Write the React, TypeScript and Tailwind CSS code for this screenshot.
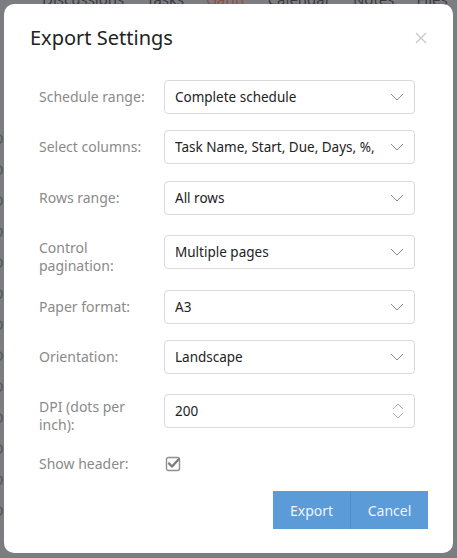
import React from "react";

const font = { fontFamily: '"Noto Sans", "Open Sans", sans-serif' };

function Chevron() {
  return (
    <svg width="14" height="8" viewBox="0 0 14 8" className="shrink-0">
      <polyline points="1,1 7,7 13,1" fill="none" stroke="#8a8a8a" strokeWidth="1" />
    </svg>
  );
}

function Spinner() {
  return (
    <svg width="12" height="18" viewBox="0 0 12 18" className="shrink-0">
      <polyline points="1,7 6,2 11,7" fill="none" stroke="#b0b0b0" strokeWidth="1" />
      <polyline points="1,11 6,16 11,11" fill="none" stroke="#b0b0b0" strokeWidth="1" />
    </svg>
  );
}

function Field({ value, spin }: { value: string; spin?: boolean }) {
  return (
    <div className="w-[251px] h-[34px] shrink-0 border border-[#d9d9d9] rounded-[4px] flex items-center pl-[10px] pr-[10px] bg-white">
      <span className="flex-1 text-[13.5px] text-[#222] whitespace-nowrap overflow-hidden">{value}</span>
      {spin ? <Spinner /> : <Chevron />}
    </div>
  );
}

function Row({ label, value, spin, cls }: { label: React.ReactNode; value: string; spin?: boolean; cls: string }) {
  return (
    <div className={"flex items-start " + cls}>
      <div className="w-[125px] shrink-0 text-[14px] leading-[18px] text-[#8a8a8a]">{label}</div>
      <Field value={value} spin={spin} />
    </div>
  );
}

export default function App() {
  return (
    <div className="relative w-[457px] h-[558px] overflow-hidden bg-[#7b7d81]" style={font}>
      <div className="flex gap-[22px] pl-[42px] -mt-[12px] text-[15px] text-[#3a3b3e] whitespace-nowrap">
        <span>Discussions</span>
        <span>Tasks</span>
        <span className="text-[#9a4a45]">Gantt</span>
        <span>Calendar</span>
        <span>Notes</span>
        <span>Files</span>
      </div>
      <div className="absolute left-[-8px] top-[130px] flex flex-col gap-[14px] text-[15px] leading-[17px] text-[#55575b]">
        <span>O</span>
        <span>O</span>
        <span>O</span>
        <span>O</span>
        <span>O</span>
        <span>O</span>
        <span>O</span>
        <span>O</span>
        <span>O</span>
        <span>O</span>
        <span>O</span>
        <span>O</span>
        <span>O</span>
      </div>
      <div className="absolute left-[4px] top-[4px] w-[449px] h-[549px] bg-white rounded-[10px]">
        <div className="flex items-center justify-between pl-[26px] pr-[26px] pt-[21px]">
          <h1 className="text-[20px] leading-[26px] text-[#222]">Export Settings</h1>
          <svg width="12" height="12" viewBox="0 0 12 12">
            <path d="M1 1 L11 11 M11 1 L1 11" stroke="#c8c8c8" strokeWidth="1.2" />
          </svg>
        </div>
        <div className="pl-[35px] flex flex-col">
          <Row cls="mt-[29px] [&>div:first-child]:pt-[8px]" label="Schedule range:" value="Complete schedule" />
          <Row cls="mt-[16px] [&>div:first-child]:pt-[8px]" label="Select columns:" value="Task Name, Start, Due, Days, %," />
          <Row cls="mt-[17px] [&>div:first-child]:pt-[8px]" label="Rows range:" value="All rows" />
          <Row cls="mt-[20px] [&>div:first-child]:pt-[4px]" label={<>Control<br />pagination:</>} value="Multiple pages" />
          <Row cls="mt-[15px] [&>div:first-child]:pt-[8px]" label="Paper format:" value="A3" />
          <Row cls="mt-[16px] [&>div:first-child]:pt-[8px]" label="Orientation:" value="Landscape" />
          <Row cls="mt-[20px] [&>div:first-child]:pt-[4px]" label={<>DPI (dots per<br />inch):</>} value="200" spin />
          <div className="flex items-center mt-[21px]">
            <div className="w-[125px] shrink-0 text-[14px] leading-[18px] text-[#8a8a8a]">Show header:</div>
            <svg width="16" height="16" viewBox="0 0 16 16" className="ml-[1px]">
              <rect x="1.5" y="1.5" width="13" height="13" rx="2" fill="white" stroke="#8f8f8f" strokeWidth="1.4" />
              <path d="M4 7.5 L7 10.5 L13.5 3.5" fill="none" stroke="#7d7d7d" strokeWidth="2.4" strokeLinecap="round" strokeLinejoin="round" />
            </svg>
          </div>
        </div>
        <div className="flex justify-end pr-[25px] mt-[18px]">
          <button className="w-[78px] h-[38px] bg-[#5b9bd8] text-[#eef4fb] text-[14px] border-r border-[#4f8ccb]">Export</button>
          <button className="w-[77px] h-[38px] bg-[#5b9bd8] text-[#eef4fb] text-[14px]">Cancel</button>
        </div>
      </div>
    </div>
  );
}
